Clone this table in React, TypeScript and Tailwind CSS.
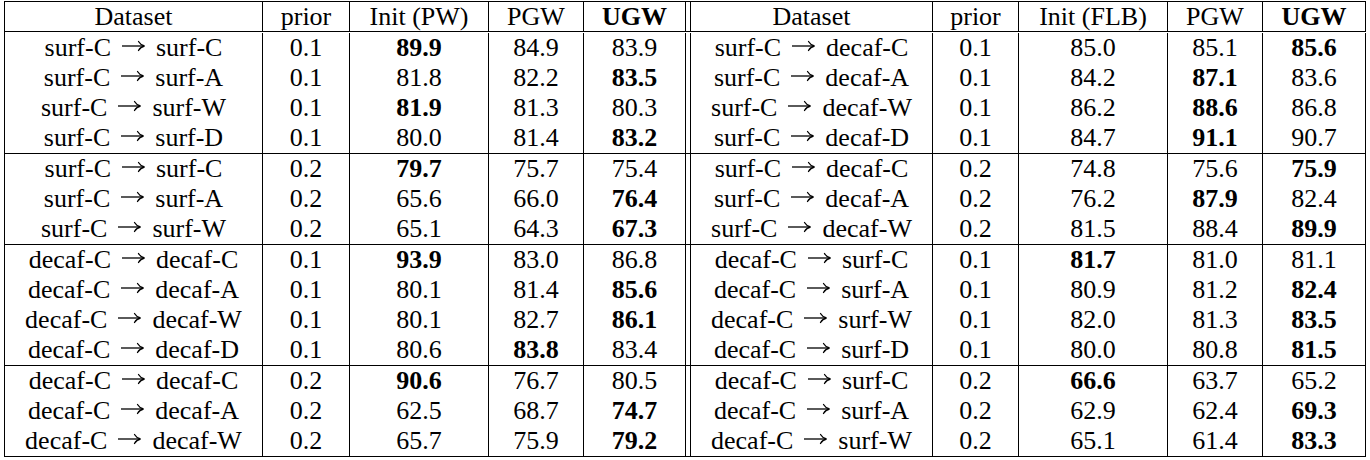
import React from "react";

type Cell = { t: string; b?: boolean };
type Row = Cell[];

const c = (t: string, b?: boolean): Cell => ({ t, b });

const sections: Row[][] = [
  [
    [c("surf-C → surf-C"), c("0.1"), c("89.9", true), c("84.9"), c("83.9"), c("surf-C → decaf-C"), c("0.1"), c("85.0"), c("85.1"), c("85.6", true)],
    [c("surf-C → surf-A"), c("0.1"), c("81.8"), c("82.2"), c("83.5", true), c("surf-C → decaf-A"), c("0.1"), c("84.2"), c("87.1", true), c("83.6")],
    [c("surf-C → surf-W"), c("0.1"), c("81.9", true), c("81.3"), c("80.3"), c("surf-C → decaf-W"), c("0.1"), c("86.2"), c("88.6", true), c("86.8")],
    [c("surf-C → surf-D"), c("0.1"), c("80.0"), c("81.4"), c("83.2", true), c("surf-C → decaf-D"), c("0.1"), c("84.7"), c("91.1", true), c("90.7")],
  ],
  [
    [c("surf-C → surf-C"), c("0.2"), c("79.7", true), c("75.7"), c("75.4"), c("surf-C → decaf-C"), c("0.2"), c("74.8"), c("75.6"), c("75.9", true)],
    [c("surf-C → surf-A"), c("0.2"), c("65.6"), c("66.0"), c("76.4", true), c("surf-C → decaf-A"), c("0.2"), c("76.2"), c("87.9", true), c("82.4")],
    [c("surf-C → surf-W"), c("0.2"), c("65.1"), c("64.3"), c("67.3", true), c("surf-C → decaf-W"), c("0.2"), c("81.5"), c("88.4"), c("89.9", true)],
  ],
  [
    [c("decaf-C → decaf-C"), c("0.1"), c("93.9", true), c("83.0"), c("86.8"), c("decaf-C → surf-C"), c("0.1"), c("81.7", true), c("81.0"), c("81.1")],
    [c("decaf-C → decaf-A"), c("0.1"), c("80.1"), c("81.4"), c("85.6", true), c("decaf-C → surf-A"), c("0.1"), c("80.9"), c("81.2"), c("82.4", true)],
    [c("decaf-C → decaf-W"), c("0.1"), c("80.1"), c("82.7"), c("86.1", true), c("decaf-C → surf-W"), c("0.1"), c("82.0"), c("81.3"), c("83.5", true)],
    [c("decaf-C → decaf-D"), c("0.1"), c("80.6"), c("83.8", true), c("83.4"), c("decaf-C → surf-D"), c("0.1"), c("80.0"), c("80.8"), c("81.5", true)],
  ],
  [
    [c("decaf-C → decaf-C"), c("0.2"), c("90.6", true), c("76.7"), c("80.5"), c("decaf-C → surf-C"), c("0.2"), c("66.6", true), c("63.7"), c("65.2")],
    [c("decaf-C → decaf-A"), c("0.2"), c("62.5"), c("68.7"), c("74.7", true), c("decaf-C → surf-A"), c("0.2"), c("62.9"), c("62.4"), c("69.3", true)],
    [c("decaf-C → decaf-W"), c("0.2"), c("65.7"), c("75.9"), c("79.2", true), c("decaf-C → surf-W"), c("0.2"), c("65.1"), c("61.4"), c("83.3", true)],
  ],
];

const header: Row = [
  c("Dataset"), c("prior"), c("Init (PW)"), c("PGW"), c("UGW", true),
  c("Dataset"), c("prior"), c("Init (FLB)"), c("PGW"), c("UGW", true),
];

const widths = [
  "w-[258px]", "w-[87px]", "w-[139px]", "w-[95px]", "w-[102px]",
  "w-[242px]", "w-[86px]", "w-[149px]", "w-[95px]", "w-[103px]",
];

function Arrow() {
  return (
    <svg
      width="23"
      height="12"
      viewBox="0 0 23 12"
      className="mx-[11px] translate-y-[-2px] shrink-0"
      fill="none"
      stroke="black"
      strokeWidth="1.3"
    >
      <path d="M0 6 H22" />
      <path d="M16.5 1.5 Q18.5 5 22.5 6 Q18.5 7 16.5 10.5" strokeLinecap="round" />
    </svg>
  );
}

function Text({ cell }: { cell: Cell }) {
  if (cell.t.includes("→")) {
    const [a, b] = cell.t.split(" → ");
    return (
      <span className="flex items-center whitespace-nowrap">
        <span>{a}</span>
        <Arrow />
        <span>{b}</span>
      </span>
    );
  }
  return <span className={cell.b ? "font-bold" : ""}>{cell.t}</span>;
}

function TableRow({ row, h }: { row: Row; h: string }) {
  return (
    <div className={`flex ${h}`}>
      {row.map((cell, i) => (
        <React.Fragment key={i}>
          {i === 5 && <div className="w-[5px] shrink-0 border-r border-black" />}
          <div
            className={`${widths[i]} shrink-0 border-r border-black flex items-center justify-center`}
          >
            <Text cell={cell} />
          </div>
        </React.Fragment>
      ))}
    </div>
  );
}

export default function App() {
  return (
    <div className="w-[1370px] h-[460px] bg-white pl-[4px] pt-[1px]">
      <div className="w-fit border-l border-t border-black text-black text-[26px] leading-none font-['Liberation_Serif',serif]">
        <div className="border-b border-black">
          <TableRow row={header} h="h-[29px]" />
        </div>
        {sections.map((sec, si) => (
          <div key={si} className={`border-b border-black ${si === 0 ? "pt-[1px]" : ""}`}>
            {sec.map((row, ri) => (
              <TableRow key={ri} row={row} h="h-[30px]" />
            ))}
          </div>
        ))}
      </div>
    </div>
  );
}
